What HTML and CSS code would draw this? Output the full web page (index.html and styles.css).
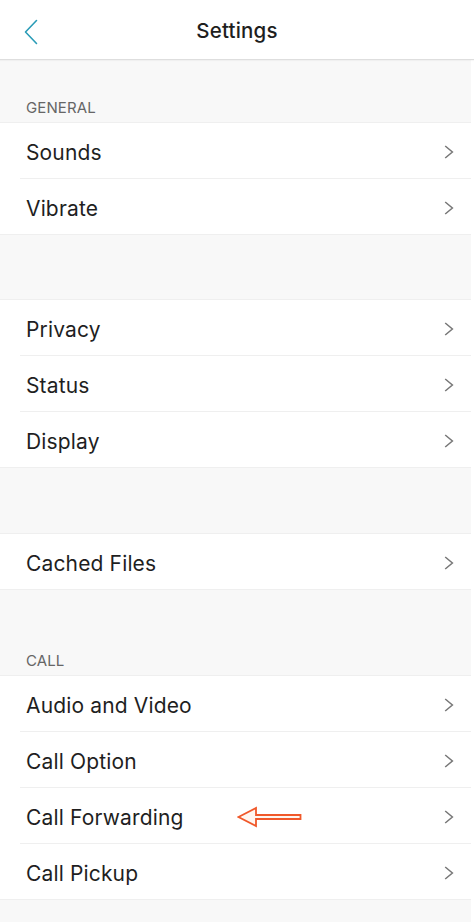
FILE: index.html
```html
<!DOCTYPE html>
<html lang="en">
<head>
<meta charset="utf-8">
<title>Settings</title>
<link rel="stylesheet" href="styles.css">
</head>
<body>
<div class="screen">
  <header class="nav">
    <span class="back">
      <svg width="14" height="26" viewBox="0 0 14 26"><path d="M12.5 1.5 L1.5 13 L12.5 24.5" fill="none" stroke="#2a9cb7" stroke-width="1.6" stroke-linecap="round" stroke-linejoin="round"/></svg>
    </span>
    <h1 class="title">Settings</h1>
  </header>

  <div class="section-label label-general">GENERAL</div>
  <ul class="group">
    <li class="row"><span>Sounds</span><svg class="chev" width="10" height="14" viewBox="0 0 10 14"><path d="M1.2 1 L8.4 7 L1.2 13" fill="none" stroke="#777" stroke-width="1.5" stroke-linejoin="miter"/></svg></li>
    <li class="row"><span>Vibrate</span><svg class="chev" width="10" height="14" viewBox="0 0 10 14"><path d="M1.2 1 L8.4 7 L1.2 13" fill="none" stroke="#777" stroke-width="1.5"/></svg></li>
  </ul>

  <div class="spacer"></div>
  <ul class="group">
    <li class="row"><span>Privacy</span><svg class="chev" width="10" height="14" viewBox="0 0 10 14"><path d="M1.2 1 L8.4 7 L1.2 13" fill="none" stroke="#777" stroke-width="1.5"/></svg></li>
    <li class="row"><span>Status</span><svg class="chev" width="10" height="14" viewBox="0 0 10 14"><path d="M1.2 1 L8.4 7 L1.2 13" fill="none" stroke="#777" stroke-width="1.5"/></svg></li>
    <li class="row"><span>Display</span><svg class="chev" width="10" height="14" viewBox="0 0 10 14"><path d="M1.2 1 L8.4 7 L1.2 13" fill="none" stroke="#777" stroke-width="1.5"/></svg></li>
  </ul>

  <div class="spacer spacer-b"></div>
  <ul class="group">
    <li class="row"><span>Cached Files</span><svg class="chev" width="10" height="14" viewBox="0 0 10 14"><path d="M1.2 1 L8.4 7 L1.2 13" fill="none" stroke="#777" stroke-width="1.5"/></svg></li>
  </ul>

  <div class="section-label label-call">CALL</div>
  <ul class="group">
    <li class="row"><span>Audio and Video</span><svg class="chev" width="10" height="14" viewBox="0 0 10 14"><path d="M1.2 1 L8.4 7 L1.2 13" fill="none" stroke="#777" stroke-width="1.5"/></svg></li>
    <li class="row"><span>Call Option</span><svg class="chev" width="10" height="14" viewBox="0 0 10 14"><path d="M1.2 1 L8.4 7 L1.2 13" fill="none" stroke="#777" stroke-width="1.5"/></svg></li>
    <li class="row"><span>Call Forwarding</span>
      <svg class="pointer" width="66" height="22" viewBox="0 0 66 22"><polygon points="1.5,11 19,2 19,9 63.5,9 63.5,13 19,13 19,20" fill="#fff6f0" stroke="#f0582a" stroke-width="1.8" stroke-linejoin="miter"/></svg>
      <svg class="chev" width="10" height="14" viewBox="0 0 10 14"><path d="M1.2 1 L8.4 7 L1.2 13" fill="none" stroke="#777" stroke-width="1.5"/></svg></li>
    <li class="row"><span>Call Pickup</span><svg class="chev" width="10" height="14" viewBox="0 0 10 14"><path d="M1.2 1 L8.4 7 L1.2 13" fill="none" stroke="#777" stroke-width="1.5"/></svg></li>
  </ul>
</div>
</body>
</html>
```
FILE: styles.css
```css
html, body {
  margin: 0;
  padding: 0;
  background: #ffffff;
}
body {
  font-family: Inter, "Liberation Sans", Arial, sans-serif;
  color: #222;
}
.screen {
  width: 471px;
  min-height: 922px;
  background: #f8f8f8;
  display: flex;
  flex-direction: column;
}
.nav {
  height: 59px;
  background: #fff;
  border-bottom: 1px solid #dedede;
  box-shadow: 0 1px 1px rgba(0,0,0,0.03);
  display: flex;
  align-items: center;
  justify-content: center;
  position: relative;
  width: 474px;
}
.back {
  position: absolute;
  left: 24px;
  top: 19px;
  display: block;
  line-height: 0;
}
.title {
  margin: 0;
  font-size: 20.5px;
  font-weight: 500;
  color: #1e1e1e;
  letter-spacing: 0.2px;
  padding-top: 2px;
}
.section-label {
  display: flex;
  align-items: flex-end;
  padding: 0 26px 5px;
  font-size: 15px;
  color: #666;
  letter-spacing: 0.1px;
  box-sizing: border-box;
}
.label-general { height: 62px; }
.label-call { height: 85px; }
.spacer { height: 64px; }
.spacer-b { height: 65px; }
.group {
  list-style: none;
  margin: 0;
  padding: 0;
  background: #fff;
  border-top: 1px solid #efefef;
  border-bottom: 1px solid #efefef;
}
.row {
  position: relative;
  height: 55px;
  display: flex;
  align-items: center;
  justify-content: space-between;
  padding: 3px 17px 0 26px;
  box-sizing: border-box;
  font-size: 21px;
  color: #1f1f1f;
  letter-spacing: 0.15px;
}
.row + .row::before {
  content: "";
  position: absolute;
  left: 20px;
  right: 0;
  top: -1px;
  height: 1px;
  background: #efefef;
}
.row + .row { margin-top: 1px; }
.chev {
  display: block;
  flex: none;
}
.pointer {
  position: absolute;
  left: 237px;
  top: 18px;
}
```
